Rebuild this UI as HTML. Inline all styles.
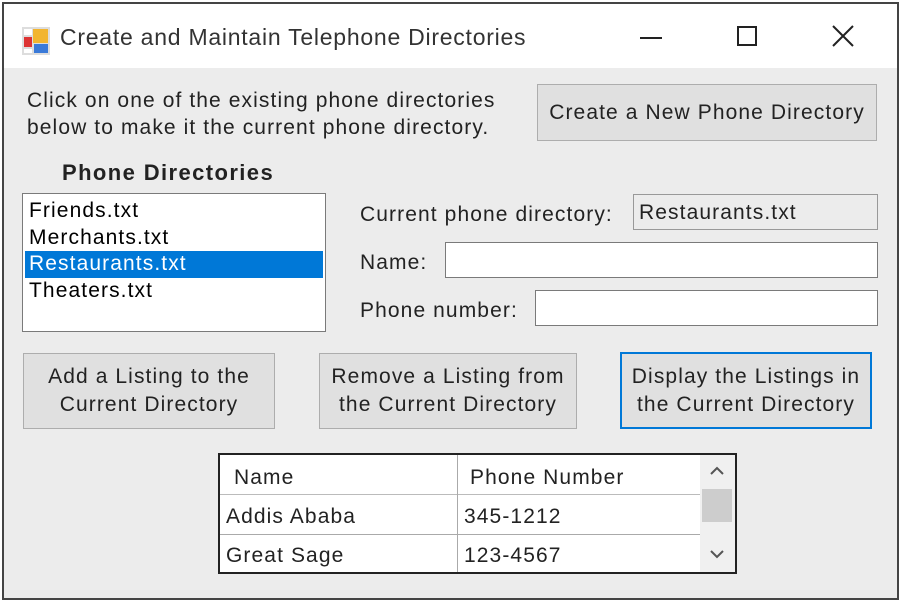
<!DOCTYPE html>
<html><head><style>
*{box-sizing:border-box}
body{margin:0;width:902px;height:604px;background:#fff;font-family:"Liberation Sans",sans-serif;position:relative;overflow:hidden}
.win{position:absolute;left:2px;top:2px;width:897px;height:598px;border:2px solid #444;background:#ececec}
.title{position:absolute;left:0;top:0;width:893px;height:64px;background:#fff}
.a{position:absolute;white-space:nowrap;color:#222}
.t{font-size:21px;letter-spacing:1.1px}
.btn{position:absolute;background:#e0e0e0;border:1px solid #adadad;text-align:center;font-size:21px;letter-spacing:1.1px;color:#222;line-height:28px;display:flex;align-items:center;justify-content:center}
.box{position:absolute;background:#fff;border:1px solid #7a7a7a}
</style></head><body>
<div class="win">
<div class="title">
<svg style="position:absolute;left:17px;top:22px" width="30" height="30" viewBox="0 0 30 30">
<rect x="1" y="1" width="28" height="28" fill="#ddd"/>
<rect x="3" y="3" width="8" height="6" fill="#fff"/>
<rect x="3" y="11" width="8" height="10" fill="#d33"/>
<rect x="12" y="3" width="15" height="14" fill="#f2b530"/>
<rect x="13" y="18" width="14" height="9" fill="#3a7ad8"/>
<rect x="3" y="23" width="8" height="4" fill="#fff"/>
</svg>
<div class="a" style="left:56px;top:20px;font-size:23px;letter-spacing:0.75px;color:#333">Create and Maintain Telephone Directories</div>
<div style="position:absolute;left:636px;top:33px;width:22px;height:2px;background:#222"></div>
<div style="position:absolute;left:733px;top:22px;width:20px;height:20px;border:2px solid #222"></div>
<svg style="position:absolute;left:828px;top:21px" width="22" height="22"><path d="M1 1L21 21M21 1L1 21" stroke="#222" stroke-width="2"/></svg>
</div>
<div class="a t" style="left:23px;top:83px;line-height:27px">Click on one of the existing phone directories<br>below to make it the current phone directory.</div>
<div class="btn" style="left:533px;top:80px;width:340px;height:57px">Create a New Phone Directory</div>
<div class="a" style="left:58px;top:156px;font-size:22px;letter-spacing:1.4px;font-weight:bold">Phone Directories</div>
<div class="box t" style="left:18px;top:189px;width:304px;height:139px;line-height:26.5px;padding-top:4px">
<div style="padding-left:6px">Friends.txt</div>
<div style="padding-left:6px">Merchants.txt</div>
<div style="background:#0078d7;color:#fff;margin:0 2px;padding-left:4px">Restaurants.txt</div>
<div style="padding-left:6px">Theaters.txt</div>
</div>
<div class="a t" style="left:356px;top:199px">Current phone directory:</div>
<div class="t" style="position:absolute;left:629px;top:190px;width:245px;height:36px;border:1px solid #999;background:#ececec;padding:6px 5px;color:#222">Restaurants.txt</div>
<div class="a t" style="left:356px;top:247px">Name:</div>
<div class="box" style="left:441px;top:238px;width:433px;height:36px"></div>
<div class="a t" style="left:356px;top:295px">Phone number:</div>
<div class="box" style="left:531px;top:286px;width:343px;height:36px"></div>
<div class="btn" style="left:19px;top:349px;width:252px;height:76px">Add a Listing to the<br>Current Directory</div>
<div class="btn" style="left:315px;top:349px;width:258px;height:76px">Remove a Listing from<br>the Current Directory</div>
<div class="btn" style="left:616px;top:348px;width:252px;height:77px;border:2px solid #0078d7">Display the Listings in<br>the Current Directory</div>
<div class="t" style="position:absolute;left:214px;top:449px;width:519px;height:121px;border:2px solid #222;background:#fff;color:#222">
<div style="position:absolute;left:0;top:0;width:480px;height:40px;border-bottom:1px solid #bbb"></div>
<div style="position:absolute;left:237px;top:0;width:1px;height:117px;background:#aaa"></div>
<div style="position:absolute;left:0;top:79px;width:480px;height:1px;background:#aaa"></div>
<div class="a" style="left:14px;top:11px">Name</div>
<div class="a" style="left:250px;top:11px">Phone Number</div>
<div class="a" style="left:6px;top:50px">Addis Ababa</div>
<div class="a" style="left:244px;top:50px">345-1212</div>
<div class="a" style="left:6px;top:89px">Great Sage</div>
<div class="a" style="left:244px;top:89px">123-4567</div>
<div style="position:absolute;left:480px;top:0;width:35px;height:117px;background:#f0f0f0"></div>
<div style="position:absolute;left:482px;top:34px;width:30px;height:33px;background:#cdcdcd"></div>
<svg style="position:absolute;left:489px;top:10px" width="16" height="12"><path d="M2 9L8 3L14 9" stroke="#555" stroke-width="2" fill="none"/></svg>
<svg style="position:absolute;left:489px;top:93px" width="16" height="12"><path d="M2 3L8 9L14 3" stroke="#555" stroke-width="2" fill="none"/></svg>
</div>
</div>
</body></html>
